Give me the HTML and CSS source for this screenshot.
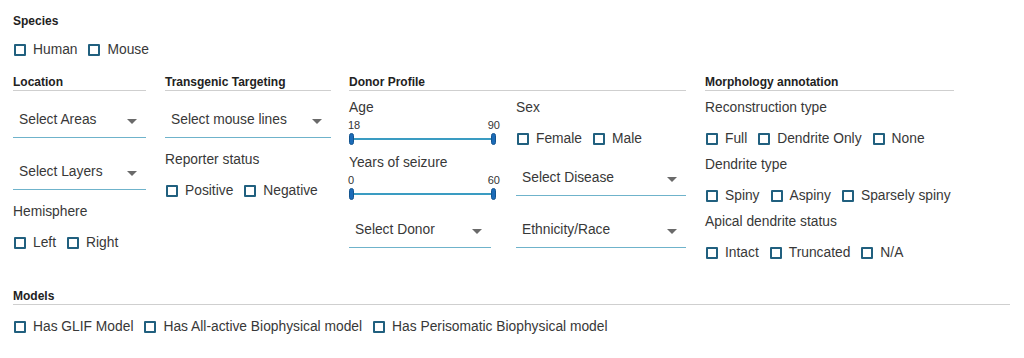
FILE: index.html
```html
<!DOCTYPE html>
<html>
<head>
<meta charset="utf-8">
<link rel="stylesheet" href="styles.css">
</head>
<body>
<div class="page">
  <div class="title">Species</div>
  <div class="cb-row">
    <label class="cb"><span class="box"></span>Human</label>
    <label class="cb"><span class="box"></span>Mouse</label>
  </div>

  <div class="columns">
    <div class="col col-location">
      <div class="header">Location</div>
      <div class="select first">Select Areas<span class="arrow"></span></div>
      <div class="select second">Select Layers<span class="arrow"></span></div>
      <div class="label after-select">Hemisphere</div>
      <div class="cb-row">
        <label class="cb"><span class="box"></span>Left</label>
        <label class="cb"><span class="box"></span>Right</label>
      </div>
    </div>

    <div class="col col-transgenic">
      <div class="header">Transgenic Targeting</div>
      <div class="select first">Select mouse lines<span class="arrow"></span></div>
      <div class="label after-select">Reporter status</div>
      <div class="cb-row">
        <label class="cb"><span class="box"></span>Positive</label>
        <label class="cb"><span class="box"></span>Negative</label>
      </div>
    </div>

    <div class="col col-donor">
      <div class="header">Donor Profile</div>
      <div class="donor-grid">
        <div class="sub sub-left">
          <div class="label top">Age</div>
          <div class="range-labels"><span>18</span><span>90</span></div>
          <div class="slider"><span class="handle"></span><span class="track"></span><span class="handle"></span></div>
          <div class="label next">Years of seizure</div>
          <div class="range-labels"><span>0</span><span>60</span></div>
          <div class="slider"><span class="handle"></span><span class="track"></span><span class="handle"></span></div>
          <div class="select donor-select">Select Donor<span class="arrow"></span></div>
        </div>
        <div class="sub sub-right">
          <div class="label top">Sex</div>
          <div class="cb-row">
            <label class="cb"><span class="box"></span>Female</label>
            <label class="cb"><span class="box"></span>Male</label>
          </div>
          <div class="select disease">Select Disease<span class="arrow"></span></div>
          <div class="select ethnicity">Ethnicity/Race<span class="arrow"></span></div>
        </div>
      </div>
    </div>

    <div class="col col-morph">
      <div class="header">Morphology annotation</div>
      <div class="label top">Reconstruction type</div>
      <div class="cb-row">
        <label class="cb"><span class="box"></span>Full</label>
        <label class="cb"><span class="box"></span>Dendrite Only</label>
        <label class="cb"><span class="box"></span>None</label>
      </div>
      <div class="label next-row">Dendrite type</div>
      <div class="cb-row">
        <label class="cb"><span class="box"></span>Spiny</label>
        <label class="cb"><span class="box"></span>Aspiny</label>
        <label class="cb"><span class="box"></span>Sparsely spiny</label>
      </div>
      <div class="label next-row">Apical dendrite status</div>
      <div class="cb-row">
        <label class="cb"><span class="box"></span>Intact</label>
        <label class="cb"><span class="box"></span>Truncated</label>
        <label class="cb"><span class="box"></span>N/A</label>
      </div>
    </div>
  </div>

  <div class="header models">Models</div>
  <div class="cb-row">
    <label class="cb"><span class="box"></span>Has GLIF Model</label>
    <label class="cb"><span class="box"></span>Has All-active Biophysical model</label>
    <label class="cb"><span class="box"></span>Has Perisomatic Biophysical model</label>
  </div>
</div>
</body>
</html>
```

FILE: styles.css
```css
html, body {
  margin: 0;
  padding: 0;
  background: #ffffff;
}

body {
  font-family: "Liberation Sans", Arial, sans-serif;
  font-size: 13.8px;
  color: #383838;
}

.page {
  padding: 12px 13px 0 13px;
  width: 997px;
}

.title {
  font-size: 12px;
  font-weight: bold;
  line-height: 16px;
  padding-top: 1px;
  color: #222222;
}

.cb-row {
  display: flex;
  align-items: center;
  box-sizing: border-box;
  height: 22px;
  padding-top: 2px;
  margin-top: 10px;
  gap: 10px;
  white-space: nowrap;
}

.title + .cb-row { margin-top: 9px; }

.cb {
  display: flex;
  align-items: center;
  gap: 8px;
  line-height: 20px;
  color: #383838;
}

.box {
  display: inline-block;
  box-sizing: border-box;
  width: 12px;
  height: 12px;
  border: 2px solid #21607f;
  border-radius: 1px;
  margin-left: 1px;
  margin-right: -1px;
  margin-top: -1px;
  flex: none;
}

.columns {
  display: flex;
  align-items: flex-start;
  margin-top: 13px;
}

.col-location { width: 133px; }
.col-transgenic { width: 166px; margin-left: 19px; }
.col-donor { width: 337px; margin-left: 18px; }
.col-morph { width: 249px; margin-left: 19px; }

.header {
  font-size: 12px;
  font-weight: bold;
  line-height: 16px;
  color: #222222;
  padding-top: 1px;
  padding-bottom: 0;
  border-bottom: 1px solid #cfcfcf;
}

.label {
  box-sizing: border-box;
  line-height: 18px;
  height: 20px;
  padding-top: 2px;
  color: #383838;
}

.label.top { margin-top: 6px; }
.label.next-row { margin-top: 5px; }
.label.after-select { margin-top: 11px; }

.select {
  position: relative;
  box-sizing: border-box;
  height: 37px;
  line-height: 34px;
  padding-top: 2px;
  padding-left: 6px;
  border-bottom: 1px solid #6fb3cb;
  color: #383838;
}

.select.first { margin-top: 10px; }
.select.second { margin-top: 15px; }

.arrow {
  position: absolute;
  right: 9px;
  top: 18px;
  width: 0;
  height: 0;
  border-left: 5px solid transparent;
  border-right: 5px solid transparent;
  border-top: 5px solid #6a6a6a;
}

.donor-grid {
  display: flex;
  align-items: flex-start;
}

.sub-left { width: 147px; }
.sub-right { width: 170px; margin-left: 20px; }

.range-labels {
  display: flex;
  justify-content: space-between;
  font-size: 11px;
  line-height: 14px;
  height: 14px;
  margin-top: 1px;
  margin-left: -1px;
  margin-right: -4px;
  color: #333333;
}

.slider {
  display: flex;
  align-items: center;
  height: 14px;
}

.track {
  flex: 1;
  height: 2px;
  background: #3a9cc2;
}

.handle {
  box-sizing: border-box;
  width: 5px;
  height: 12px;
  background: #1b6bb8;
  border: 1px solid #14558f;
  border-radius: 3px;
  flex: none;
}

.label.next { margin-top: 6px; }

.select.donor-select { margin-top: 10px; width: 142px; }
.select.disease { margin-top: 10px; }
.select.ethnicity { margin-top: 15px; }

.header.models {
  margin-top: 24px;
}
```
